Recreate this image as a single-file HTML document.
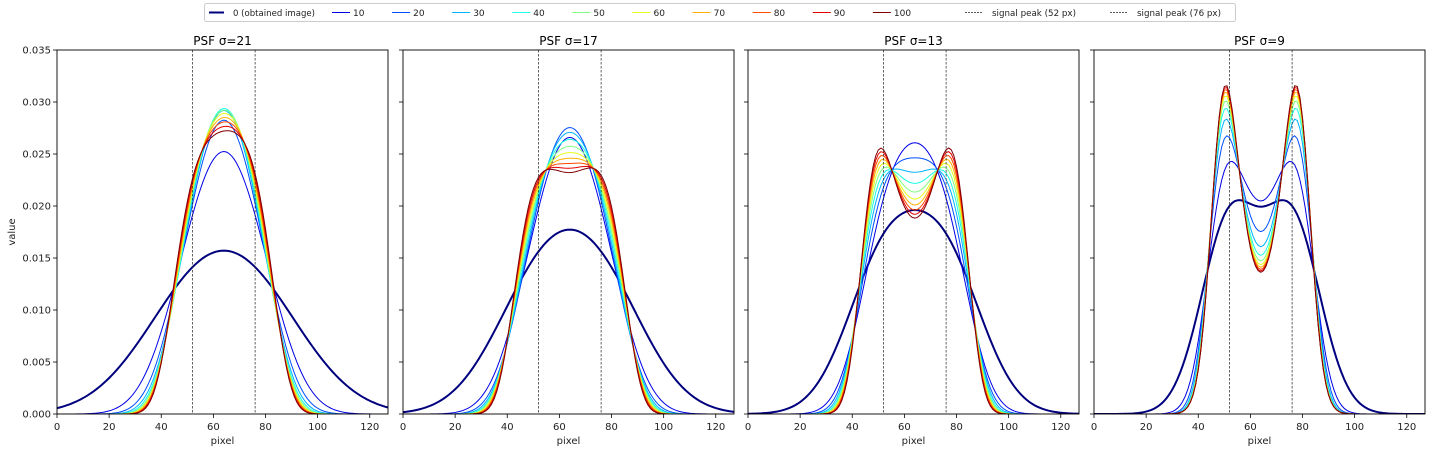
<!DOCTYPE html>
<html><head><meta charset="utf-8"><style>
html,body{margin:0;padding:0;background:#fff;}
svg{display:block;font-family:"DejaVu Sans","Liberation Sans",sans-serif;}
</style></head><body>
<svg id="s" width="1432" height="452" xmlns="http://www.w3.org/2000/svg"></svg>
<script>
const S=document.getElementById('s');
let h='';
function jet(v){
  const r=Math.min(Math.max(1.5-Math.abs(4*v-3),0),1);
  const g=Math.min(Math.max(1.5-Math.abs(4*v-2),0),1);
  const b=Math.min(Math.max(1.5-Math.abs(4*v-1),0),1);
  return `rgb(${Math.round(r*255)},${Math.round(g*255)},${Math.round(b*255)})`;
}
const cols=[];for(let k=1;k<=10;k++)cols.push(jet(k/10));
const N=128;
function gauss(x,s){return Math.exp(-x*x/(2*s*s))/(s*Math.sqrt(2*Math.PI));}
const sig=[];for(let i=0;i<N;i++)sig.push(0.5*gauss(i-52,6)+0.5*gauss(i-76,6));
function kern(s){const hw=Math.ceil(4*s);const k=[];let t=0;for(let i=-hw;i<=hw;i++){const v=Math.exp(-i*i/(2*s*s));k.push(v);t+=v;}return {k:k.map(v=>v/t),hw};}
function conv(a,K){const o=new Array(N).fill(0);for(let i=0;i<N;i++){let t=0;for(let j=-K.hw;j<=K.hw;j++){const p=i-j;if(p>=0&&p<N)t+=a[p]*K.k[j+K.hw];}o[i]=t;}return o;}
const panels=[{s:21,x0:57},{s:17,x0:403},{s:13,x0:748},{s:9,x0:1094}];
const W=331,Y0=414,YT=50;
function X(x0,v){return x0+v*W/127;}
function Yv(v){return Y0-v*(Y0-YT)/0.035;}
function path(x0,arr,col,lw){let d='';arr.forEach((v,i)=>{d+=(i?'L':'M')+X(x0,i).toFixed(2)+' '+Yv(v).toFixed(2);});return `<path d="${d}" fill="none" stroke="${col}" stroke-width="${lw}" clip-path="url(#c${x0})"/>`;}
panels.forEach((p,pi)=>{
  const x0=p.x0,K=kern(p.s);
  h+=`<clipPath id="c${x0}"><rect x="${x0}" y="${YT}" width="${W}" height="${Y0-YT}"/></clipPath>`;
  const obs=conv(sig,K);
  h+=path(x0,obs,'#00007f',2);
  let u=new Array(N).fill(0.5);
  for(let it=1;it<=100;it++){
    const c=conv(u,K);const rb=obs.map((v,i)=>v/(c[i]||1e-12));const cc=conv(rb,K);u=u.map((v,i)=>v*cc[i]);
    if(it%10==0)h+=path(x0,u,cols[it/10-1],1);
  }
  [52,76].forEach(v=>{const xx=X(x0,v).toFixed(1);h+=`<line x1="${xx}" y1="${YT}" x2="${xx}" y2="${Y0}" stroke="#222" stroke-width="0.7" stroke-dasharray="2.5,1.5"/>`;});
  h+=`<rect x="${x0}" y="${YT}" width="${W}" height="${Y0-YT}" fill="none" stroke="#000" stroke-width="0.9"/>`;
  for(let t=0;t<=120;t+=20){const xx=X(x0,t);h+=`<line x1="${xx}" y1="${Y0}" x2="${xx}" y2="${Y0+4}" stroke="#000" stroke-width="0.8"/><text x="${xx}" y="${Y0+16}" font-size="10" text-anchor="middle" fill="#222">${t}</text>`;}
  for(let k=0;k<=7;k++){const v=k*0.005,yy=Yv(v);h+=`<line x1="${x0-4}" y1="${yy}" x2="${x0}" y2="${yy}" stroke="#000" stroke-width="0.8"/>`;if(pi==0)h+=`<text x="${x0-6}" y="${yy+3.5}" font-size="10" text-anchor="end" fill="#222">${v.toFixed(3)}</text>`;}
  h+=`<text x="${x0+W/2}" y="${Y0+30}" font-size="10" text-anchor="middle" fill="#222">pixel</text>`;
  h+=`<text x="${x0+W/2}" y="45" font-size="12" text-anchor="middle" fill="#000">PSF σ=${p.s}</text>`;
});
h+=`<text x="15" y="232" font-size="10" text-anchor="middle" fill="#222" transform="rotate(-90 15 232)">value</text>`;
// legend
h+=`<rect x="204.5" y="3.5" width="1031" height="18" rx="2" fill="#fff" stroke="#ccc"/>`;
h+=`<line x1="209" y1="12.5" x2="224" y2="12.5" stroke="#00007f" stroke-width="2"/><text x="233" y="16" font-size="9" fill="#222" textLength="82" lengthAdjust="spacingAndGlyphs">0 (obtained image)</text>`;
for(let k=0;k<10;k++){const lx=332+k*60.1;h+=`<line x1="${lx}" y1="12.5" x2="${lx+18}" y2="12.5" stroke="${cols[k]}" stroke-width="1"/><text x="${lx+21}" y="16" font-size="9" fill="#222">${(k+1)*10}</text>`;}
[[965,'signal peak (52 px)'],[1110,'signal peak (76 px)']].forEach(([lx,t])=>{h+=`<line x1="${lx}" y1="12.5" x2="${lx+18}" y2="12.5" stroke="#222" stroke-width="0.7" stroke-dasharray="2,1"/><text x="${lx+27}" y="16" font-size="9" fill="#222" textLength="84" lengthAdjust="spacingAndGlyphs">${t}</text>`;});
S.innerHTML=h;
</script>
</body></html>
